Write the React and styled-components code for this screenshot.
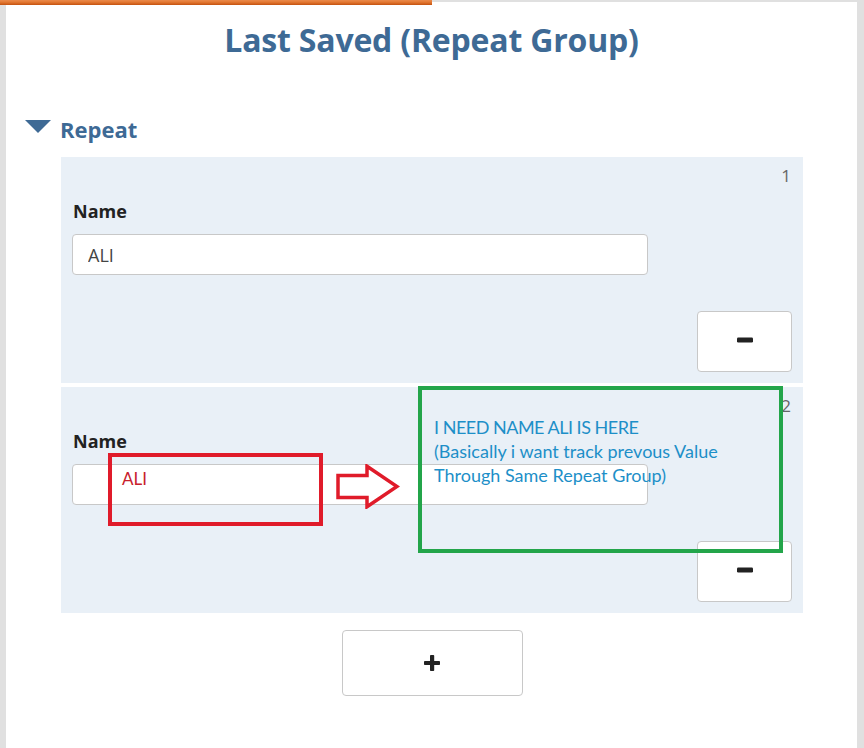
import React from "react";
import styled, { createGlobalStyle } from "styled-components";

const Global = createGlobalStyle`
  html, body { margin: 0; padding: 0; }
  body {
    background: #e0e0e0;
    font-family: "Open Sans", "Noto Sans", sans-serif;
    color: #222;
  }
`;

const Progress = styled.div`
  position: fixed;
  top: 0;
  left: 0;
  width: 432px;
  height: 5px;
  background: linear-gradient(#e98a4c 0, #e57a34 40%, #c4520f 100%);
  z-index: 5;
`;

const Page = styled.main`
  margin: 2px 7px 0 6px;
  background: #fff;
  min-height: 746px;
  padding-top: 16px;
  box-sizing: border-box;
`;

const Title = styled.h1`
  margin: 0;
  text-align: center;
  font-size: 32px;
  line-height: 44px;
  font-weight: 700;
  letter-spacing: -0.2px;
  color: #3e6a95;
`;

const SectionHeader = styled.div`
  display: flex;
  align-items: center;
  gap: 9px;
  margin: 52px 0 13px 19px;
`;

const Caret = styled.span`
  width: 0;
  height: 0;
  border-left: 13.5px solid transparent;
  border-right: 13.5px solid transparent;
  border-top: 13px solid #3e6a95;
  margin-top: -5px;
`;

const SectionTitle = styled.h2`
  margin: 0;
  font-size: 22px;
  line-height: 30px;
  font-weight: 700;
  color: #3e6a95;
`;

const RepeatList = styled.div`
  display: flex;
  flex-direction: column;
  gap: 4px;
  margin: 0 54px 0 55px;
`;

const Item = styled.section`
  position: relative;
  display: flex;
  flex-direction: column;
  background: #e9f0f7;
  padding: 9px 11px 11px 11px;
  height: 226px;
  box-sizing: border-box;
`;

const Number = styled.div`
  text-align: right;
  padding-right: 1px;
  font-size: 17px;
  line-height: 20px;
  color: #666;
`;

const Label = styled.label`
  margin-top: 13px;
  padding-left: 1px;
  font-size: 18px;
  line-height: 24px;
  font-weight: 700;
  color: #222;
`;

const Input = styled.input`
  margin-top: 11px;
  width: 576px;
  height: 41px;
  box-sizing: border-box;
  border: 1px solid #c8c8c8;
  border-radius: 4px;
  background: #fff;
  padding: 0 15px;
  font-family: "Open Sans", sans-serif;
  font-size: 18px;
  color: #444;
  outline: none;
`;

const Actions = styled.div`
  margin-top: 36px;
  display: flex;
  justify-content: flex-end;
`;

const IconButton = styled.button`
  width: ${(p) => p.$w}px;
  height: ${(p) => p.$h}px;
  display: flex;
  align-items: center;
  justify-content: center;
  background: #fff;
  border: 1px solid #c8c8c8;
  border-radius: 4px;
  padding: 0;
  cursor: pointer;
`;

const AddRow = styled.div`
  display: flex;
  justify-content: center;
  margin: 17px 54px 0 55px;
`;

/* annotations drawn on top of the form */
const RedBox = styled.div`
  position: absolute;
  left: 47px;
  top: 66px;
  width: 215px;
  height: 73px;
  box-sizing: border-box;
  border: 4px solid #e01b2a;
  padding: 12px 10px;
  font-family: Lato, "Open Sans", sans-serif;
  font-size: 17px;
  line-height: 20px;
  color: #c8202c;
`;

const Arrow = styled.svg`
  position: absolute;
  left: 275px;
  top: 77px;
`;

const GreenBox = styled.div`
  position: absolute;
  left: 357px;
  top: -1px;
  width: 365px;
  height: 167px;
  box-sizing: border-box;
  border: 4px solid #23a54a;
  padding: 25px 12px;
  font-family: Lato, "Open Sans", sans-serif;
  font-size: 18px;
  line-height: 24px;
  color: #1d8fc8;
`;

const Caps = styled.span`
  letter-spacing: -0.5px;
`;

const Minus = () => (
  <svg width="16" height="6" viewBox="0 0 16 6" style={{ marginTop: -3 }}>
    <rect x="0" y="0.5" width="16" height="5" rx="1.2" fill="#222" />
  </svg>
);

const Plus = () => (
  <svg width="16" height="16" viewBox="0 0 16 16">
    <rect x="6" y="0" width="4.2" height="16" rx="0.8" fill="#222" />
    <rect x="0" y="5.9" width="16" height="4.2" rx="0.8" fill="#222" />
  </svg>
);

function RepeatItem({ index, value, children }) {
  return (
    <Item>
      <Number>{index}</Number>
      <Label>Name</Label>
      <Input defaultValue={value} />
      <Actions>
        <IconButton $w={95} $h={61} aria-label="remove">
          <Minus />
        </IconButton>
      </Actions>
      {children}
    </Item>
  );
}

export default function App() {
  return (
    <>
      <Global />
      <Progress />
      <Page>
        <Title>Last Saved (Repeat Group)</Title>
        <SectionHeader>
          <Caret />
          <SectionTitle>Repeat</SectionTitle>
        </SectionHeader>
        <RepeatList>
          <RepeatItem index={1} value="ALI" />
          <RepeatItem index={2} value="">
            <RedBox>ALI</RedBox>
            <Arrow width="64" height="45" viewBox="0 0 64 45">
              <polygon
                points="2,11.5 31,11.5 31,2.2 61,22.5 31,42.8 31,33.5 2,33.5"
                fill="#fff"
                stroke="#e01b2a"
                strokeWidth="3.5"
              />
            </Arrow>
            <GreenBox>
              <Caps>I NEED NAME ALI IS HERE</Caps>
              <br />
              (Basically i want track prevous Value
              <br />
              Through Same Repeat Group)
            </GreenBox>
          </RepeatItem>
        </RepeatList>
        <AddRow>
          <IconButton $w={181} $h={66} aria-label="add">
            <Plus />
          </IconButton>
        </AddRow>
      </Page>
    </>
  );
}
